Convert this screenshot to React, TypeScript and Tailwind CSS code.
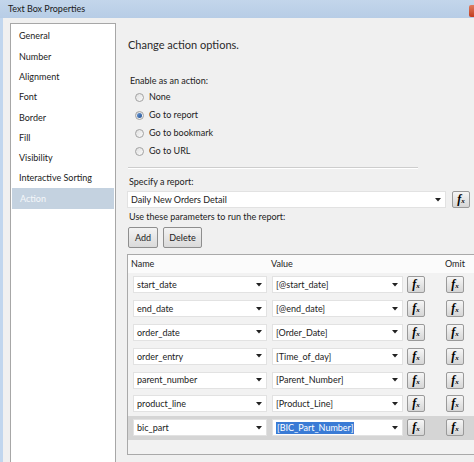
import React from 'react'

const font = { fontFamily: 'Lato, "Noto Sans", sans-serif' }

const items = [
  'General',
  'Number',
  'Alignment',
  'Font',
  'Border',
  'Fill',
  'Visibility',
  'Interactive Sorting',
  'Action',
]

const rows = [
  ['start_date', '[@start_date]'],
  ['end_date', '[@end_date]'],
  ['order_date', '[Order_Date]'],
  ['order_entry', '[Time_of_day]'],
  ['parent_number', '[Parent_Number]'],
  ['product_line', '[Product_Line]'],
  ['bic_part', '[BIC_Part_Number]'],
]

function Arrow() {
  return (
    <svg width="6" height="4" viewBox="0 0 6 4" className="shrink-0">
      <path d="M0 0 H6 L3 3.5 Z" fill="#222" />
    </svg>
  )
}

function Fx() {
  return (
    <div className="w-[18px] h-[17px] shrink-0 flex items-center justify-center rounded-[2px] border border-[#9a9a9a] bg-gradient-to-b from-[#f6f6f6] to-[#d6d6d6]">
      <span
        className="italic font-bold text-[12px] leading-none text-[#000] -mt-[1px]"
        style={{ fontFamily: '"Liberation Serif", serif' }}
      >
        f<span className="text-[7px]">x</span>
      </span>
    </div>
  )
}

function Radio({ checked, label }: { checked?: boolean; label: string }) {
  return (
    <div className="h-[18px] flex items-center pl-[8px] gap-[5px]">
      <div className="w-[9px] h-[9px] rounded-full border border-[#a2a2a2] bg-gradient-to-br from-[#e0e0e0] to-[#fafafa] flex items-center justify-center">
        {checked && <div className="w-[5px] h-[5px] rounded-full bg-gradient-to-br from-[#6d9ad4] to-[#1f4f93]" />}
      </div>
      <span className="text-[9px] text-[#222]">{label}</span>
    </div>
  )
}

function Combo({ text, width, selected }: { text: string; width: string; selected?: boolean }) {
  return (
    <div className={`${width} h-[17px] shrink-0 bg-white border border-[#e2e2e2] flex items-center pl-[3px] pr-[4px] justify-between`}>
      {selected ? (
        <span className="text-[9px] leading-[12px] bg-[#3a7bd5] text-white px-[1px]">{text}</span>
      ) : (
        <span className="text-[9px] text-[#222]">{text}</span>
      )}
      <Arrow />
    </div>
  )
}

function Button({ label, width }: { label: string; width: string }) {
  return (
    <div className={`${width} h-[21px] flex items-center justify-center rounded-[2px] border border-[#8e8e8e] bg-gradient-to-b from-[#f3f3f3] to-[#dadada] text-[9px] text-[#222]`}>
      {label}
    </div>
  )
}

export default function App() {
  return (
    <div style={font} className="w-[474px] h-[462px] overflow-hidden bg-[#f0f0f0] flex flex-col">
      {/* title bar */}
      <div className="h-[18px] shrink-0 bg-gradient-to-b from-[#c3d6eb] to-[#b7cde6] flex items-center justify-between pl-[8px]">
        <span className="text-[9px] text-[#1a1a1a]">Text Box Properties</span>
        <div className="w-[5px] h-[12px] mt-[3px] bg-gradient-to-b from-[#e07a5c] to-[#c2391c] rounded-l-[2px]" />
      </div>

      <div className="flex flex-1 min-h-0">
        <div className="w-[3px] bg-[#c1d6ee] shrink-0" />

        {/* left list */}
        <div className="ml-[7px] mt-[5px] w-[106px] shrink-0 bg-white border border-[#a7a7a7] border-b-0 pt-[2px]">
          {items.map((it) => (
            <div
              key={it}
              className={`h-[20.3px] flex items-center pl-[8px] text-[9px] ${
                it === 'Action' ? 'mx-[1px] pl-[7px] bg-[#c4d2e0] text-[#f4f7fa]' : 'text-[#222]'
              }`}
            >
              {it}
            </div>
          ))}
        </div>

        {/* right panel */}
        <div className="flex-1 ml-[11px] flex flex-col min-w-0">
          <div className="mt-[20px] h-[14px] flex items-center text-[11px] text-[#2a2a2a] pl-[1px]">
            Change action options.
          </div>

          <div className="mt-[23px] h-[12px] flex items-center text-[9px] text-[#222] pl-[3px]">
            Enable as an action:
          </div>
          <div className="mt-[1px] flex flex-col">
            <Radio label="None" />
            <Radio label="Go to report" checked />
            <Radio label="Go to bookmark" />
            <Radio label="Go to URL" />
          </div>

          <div className="mt-[7px] w-[290px] ml-[1px] h-[2px] border-t border-[#cdcdcd] border-b border-b-white" />

          <div className="mt-[7px] h-[12px] flex items-center text-[9px] text-[#222] pl-[2px]">
            Specify a report:
          </div>
          <div className="mt-[3px] flex items-center gap-[6px]">
            <Combo text="Daily New Orders Detail" width="w-[319px]" />
            <Fx />
          </div>

          <div className="mt-[3px] h-[12px] flex items-center text-[9px] text-[#222] pl-[2px]">
            Use these parameters to run the report:
          </div>
          <div className="mt-[4px] flex gap-[5px] pl-[1px]">
            <Button label="Add" width="w-[30px]" />
            <Button label="Delete" width="w-[39px]" />
          </div>

          {/* parameter grid */}
          <div className="mt-[6px] h-[201px] shrink-0 border border-r-0 border-[#a9a9a9] bg-[#f2f2f2] flex flex-col">
            <div className="h-[18px] shrink-0 bg-[#fbfbfb] flex items-center text-[9px] text-[#222]">
              <span className="w-[143px] pl-[3px]">Name</span>
              <span className="w-[174px]">Value</span>
              <span>Omit</span>
            </div>
            {rows.map(([name, value], i) => (
              <div
                key={name}
                className={`h-[23.8px] shrink-0 flex items-center pl-[5px] ${
                  i === rows.length - 1 ? 'bg-[#d5d5d5]' : ''
                }`}
              >
                <Combo text={name} width="w-[134px]" />
                <div className="w-[5px]" />
                <Combo text={value} width="w-[131px]" selected={i === rows.length - 1} />
                <div className="w-[4px]" />
                <Fx />
                <div className="w-[21px]" />
                <Fx />
              </div>
            ))}
          </div>
        </div>
      </div>
    </div>
  )
}
